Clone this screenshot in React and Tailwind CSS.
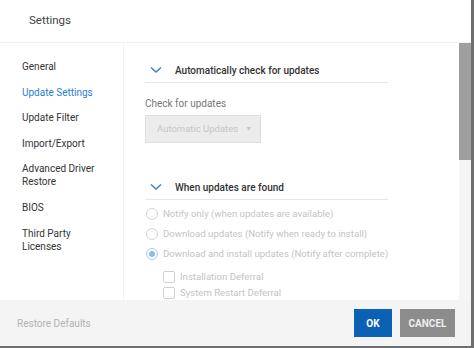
import React from "react";

const navItems = [
  { label: "General" },
  { label: "Update Settings", active: true },
  { label: "Update Filter" },
  { label: "Import/Export" },
  { label: "Advanced Driver Restore", lines: ["Advanced Driver", "Restore"] },
  { label: "BIOS" },
  { label: "Third Party Licenses", lines: ["Third Party", "Licenses"] },
];

const Chevron = () => (
  <svg width="12" height="8" viewBox="0 0 12 8" className="shrink-0">
    <polyline
      points="1,1.5 6,6 11,1.5"
      fill="none"
      stroke="#3b86c8"
      strokeWidth="1.6"
    />
  </svg>
);

const SectionHeader = ({ title }) => (
  <div className="h-[25px] flex items-center border-b border-[#e6e6e6] pl-[5px]">
    <Chevron />
    <span className="ml-[13px] text-[10px] font-medium text-[#333] whitespace-nowrap">{title}</span>
  </div>
);

const Radio = ({ label, checked }) => (
  <div className="h-[20px] flex items-center">
    <span
      className={`w-[12px] h-[12px] shrink-0 rounded-full border flex items-center justify-center ${
        checked ? "border-[#a9cbe8]" : "border-[#d4d4d4]"
      }`}
    >
      {checked && <span className="w-[6px] h-[6px] rounded-full bg-[#8dbbe3]" />}
    </span>
    <span className="ml-[5px] text-[9.6px] text-[#c4c4c4] whitespace-nowrap">{label}</span>
  </div>
);

const Checkbox = ({ label }) => (
  <div className="h-[16px] flex items-center pl-[17px]">
    <span className="w-[12px] h-[12px] shrink-0 rounded-[2px] border border-[#d0d0d0]" />
    <span className="ml-[5px] text-[9.6px] text-[#c4c4c4] whitespace-nowrap">{label}</span>
  </div>
);

export default function App() {
  return (
    <div className="w-[474px] h-[348px] bg-[#6e6e6e] flex font-['Roboto',sans-serif]">
      <div className="w-[471px] h-[346px] bg-white flex flex-col">
        {/* Header */}
        <div className="h-[43px] shrink-0 flex items-center pl-[29px] border-b border-[#f0f0f0]">
          <span className="text-[11.5px] text-[#444]">Settings</span>
        </div>

        {/* Body */}
        <div className="flex-1 flex min-h-0">
          {/* Nav */}
          <div className="w-[124px] shrink-0 border-r border-[#f3f3f3] pl-[22px] pt-[17px] flex flex-col gap-[12.6px]">
            {navItems.map((item) => (
              <div
                key={item.label}
                className={`text-[10px] leading-[13px] ${
                  item.active ? "text-[#2a7ecb]" : "text-[#333]"
                }`}
              >
                {item.lines
                  ? item.lines.map((l) => <div key={l}>{l}</div>)
                  : item.label}
              </div>
            ))}
          </div>

          {/* Main */}
          <div className="flex-1 pl-[21px] pt-[15px] overflow-hidden">
            <div className="w-[243px]">
              <SectionHeader title="Automatically check for updates" />
              <div className="mt-[14px] text-[10px] leading-[13px] text-[#777]">
                Check for updates
              </div>
              <div className="mt-[5px] w-[116px] h-[28px] bg-[#ececec] border border-[#dedede] flex items-center pl-[11px] text-[9.5px] text-[#c6c6c6] whitespace-nowrap">
                Automatic Updates
                <span className="ml-[7px] text-[7px]">▼</span>
              </div>

              <div className="mt-[32px]">
                <SectionHeader title="When updates are found" />
              </div>
              <div className="mt-[4px] pl-[1px]">
                <Radio label="Notify only (when updates are available)" />
                <Radio label="Download updates (Notify when ready to install)" />
                <Radio label="Download and install updates (Notify after complete)" checked />
                <div className="mt-[5px]">
                  <Checkbox label="Installation Deferral" />
                  <Checkbox label="System Restart Deferral" />
                </div>
              </div>
            </div>
          </div>

          {/* Scrollbar */}
          <div className="w-[12px] shrink-0 flex flex-col">
            <div className="h-[117px] bg-[#9f9f9f]" />
            <div className="flex-1 bg-[#f5f5f5]" />
          </div>
        </div>

        {/* Footer */}
        <div className="h-[46px] shrink-0 bg-[#f4f4f4] flex items-center pl-[17px] pr-[16px]">
          <span className="text-[10px] text-[#b3b3b3]">Restore Defaults</span>
          <div className="ml-auto flex gap-[8px]">
            <button className="w-[38px] h-[28px] bg-[#0b61b3] text-white text-[10px] font-bold">
              OK
            </button>
            <button className="w-[55px] h-[28px] bg-[#8c8c8c] text-[#eee] text-[10px] font-bold">
              CANCEL
            </button>
          </div>
        </div>
      </div>
    </div>
  );
}
